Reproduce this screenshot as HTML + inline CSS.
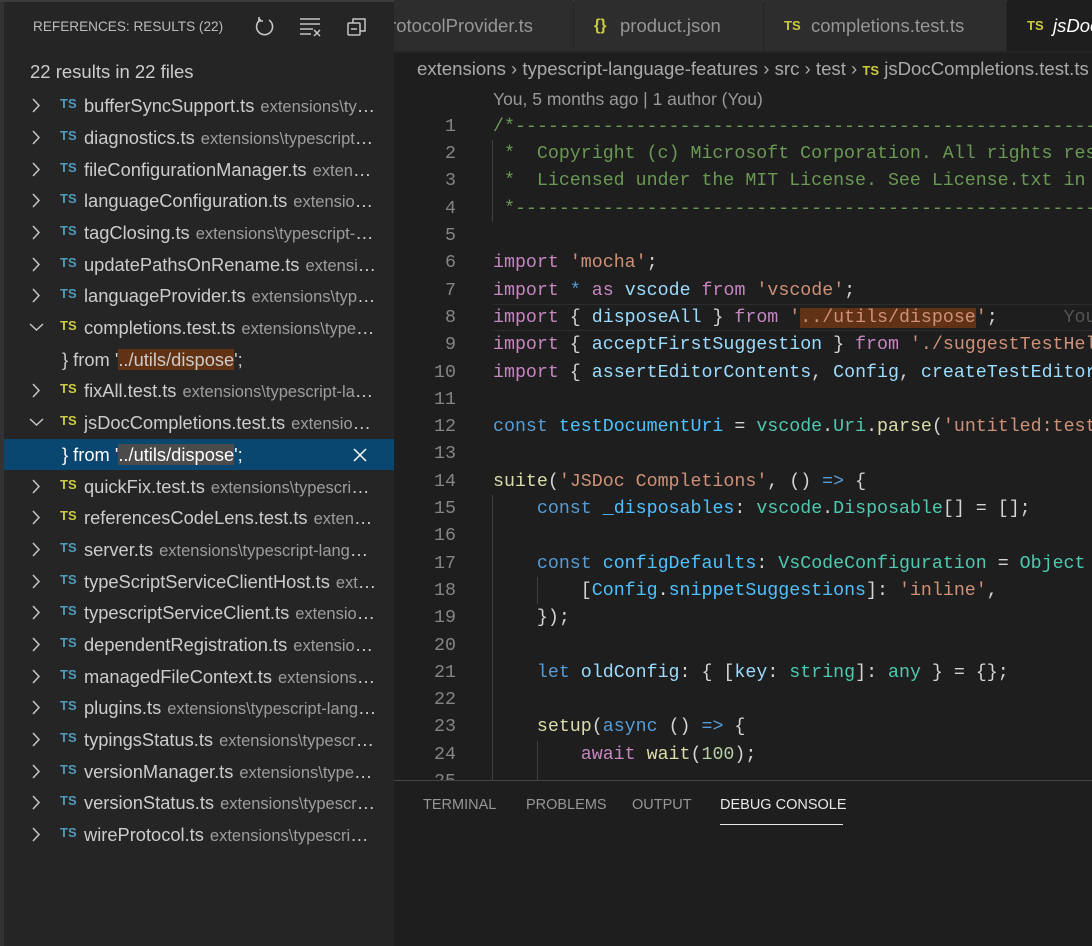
<!DOCTYPE html>
<html><head><meta charset="utf-8"><style>
*{margin:0;padding:0;box-sizing:border-box}
html{overflow:hidden}
body{width:1092px;height:946px;overflow:hidden;background:#1e1e1e;position:relative;font-family:"Liberation Sans",sans-serif}
.abs{position:absolute}
#top{left:0;top:0;width:1092px;height:2px;background:#3c3c3c}
#act{left:0;top:0;width:4px;height:946px;background:#333}
#side{left:4px;top:2px;width:390px;height:944px;background:#252526}
.row{position:absolute;left:4px;width:390px;height:31px;line-height:31px;color:#ccc;font-size:18.3px}
.chev{position:absolute;left:24px;top:0;width:16px;height:31px}
.ts{position:absolute;left:56px;font-size:13px;font-weight:bold;color:#519aba;top:-2px}
.ts.y{color:#cbcb41}
.lab{position:absolute;left:80px;width:293px;white-space:nowrap;overflow:hidden;text-overflow:ellipsis}
.desc{color:#9d9d9d;font-size:16.5px;margin-left:6px}
#tabs{left:394px;top:2px;width:698px;height:51px;background:#252526}
.tab{position:absolute;top:0;height:51px;background:#2d2d2d;color:#969696;font-size:18.5px;line-height:51px;white-space:nowrap;overflow:hidden}
.code{position:absolute;left:493px;font-family:"Liberation Mono",monospace;font-size:18.3px;white-space:pre;color:#d4d4d4;height:27px;line-height:27px;overflow:hidden;width:599px}
.ln{position:absolute;left:400px;width:56px;text-align:right;font-family:"Liberation Mono",monospace;font-size:18.3px;color:#858585;line-height:27px}
.k{color:#c586c0}.s{color:#ce9178}.v{color:#9cdcfe}.b{color:#569cd6}.f{color:#dcdcaa}.t{color:#4ec9b0}.c{color:#6a9955}.n{color:#b5cea8}
.hl{background:#613214}
.ptab{position:absolute;top:797px;font-size:14.5px;color:#969696}
#ed{position:absolute;left:394px;top:110px;width:698px;height:670px;overflow:hidden}
</style></head><body>
<div class="abs" id="side"></div>
<div class="abs" id="act"></div>
<div class="abs" id="top"></div>

<div class="abs" style="left:33px;top:19px;font-size:13.6px;color:#bbb">REFERENCES: RESULTS (22)</div>
<svg class="abs" style="left:253px;top:15px" width="24" height="24" viewBox="0 0 24 24" fill="none" stroke="#c5c5c5" stroke-width="1.6"><path d="M8 4.5A8 8 0 1 0 16 5"/><path d="M6 2v4h4" /></svg>
<svg class="abs" style="left:299px;top:16px" width="24" height="22" viewBox="0 0 24 22" fill="none" stroke="#c5c5c5" stroke-width="1.5"><path d="M1 3h20M1 8h20M1 13h13M1 18h11M15 14l6 6M21 14l-6 6"/></svg>
<svg class="abs" style="left:346px;top:16px" width="22" height="22" viewBox="0 0 22 22" fill="none" stroke="#c5c5c5" stroke-width="1.5"><rect x="2" y="7" width="12" height="12" rx="1"/><path d="M7 7V3h12v12h-5M5 13h6"/></svg>

<div class="abs" style="left:30px;top:61px;font-size:18.5px;color:#ccc">22 results in 22 files</div>

<div class="row" style="top:90px"><svg class="chev" viewBox="0 0 16 31"><path d="M5 9l6 6.5-6 6.5" fill="none" stroke="#c5c5c5" stroke-width="1.5"/></svg><span class="ts">TS</span><div class="lab">bufferSyncSupport.ts<span class="desc">extensions\typescript-language-features</span></div></div>
<div class="row" style="top:122px"><svg class="chev" viewBox="0 0 16 31"><path d="M5 9l6 6.5-6 6.5" fill="none" stroke="#c5c5c5" stroke-width="1.5"/></svg><span class="ts">TS</span><div class="lab">diagnostics.ts<span class="desc">extensions\typescript-language-features</span></div></div>
<div class="row" style="top:154px"><svg class="chev" viewBox="0 0 16 31"><path d="M5 9l6 6.5-6 6.5" fill="none" stroke="#c5c5c5" stroke-width="1.5"/></svg><span class="ts">TS</span><div class="lab">fileConfigurationManager.ts<span class="desc">extensions\typescript-language-features</span></div></div>
<div class="row" style="top:185px"><svg class="chev" viewBox="0 0 16 31"><path d="M5 9l6 6.5-6 6.5" fill="none" stroke="#c5c5c5" stroke-width="1.5"/></svg><span class="ts">TS</span><div class="lab">languageConfiguration.ts<span class="desc">extensions\typescript-language-features</span></div></div>
<div class="row" style="top:217px"><svg class="chev" viewBox="0 0 16 31"><path d="M5 9l6 6.5-6 6.5" fill="none" stroke="#c5c5c5" stroke-width="1.5"/></svg><span class="ts">TS</span><div class="lab">tagClosing.ts<span class="desc">extensions\typescript-language-features</span></div></div>
<div class="row" style="top:249px"><svg class="chev" viewBox="0 0 16 31"><path d="M5 9l6 6.5-6 6.5" fill="none" stroke="#c5c5c5" stroke-width="1.5"/></svg><span class="ts">TS</span><div class="lab">updatePathsOnRename.ts<span class="desc">extensions\typescript-language-features</span></div></div>
<div class="row" style="top:280px"><svg class="chev" viewBox="0 0 16 31"><path d="M5 9l6 6.5-6 6.5" fill="none" stroke="#c5c5c5" stroke-width="1.5"/></svg><span class="ts">TS</span><div class="lab">languageProvider.ts<span class="desc">extensions\typescript-language-features</span></div></div>
<div class="row" style="top:312px"><svg class="chev" viewBox="0 0 16 31"><path d="M2 12l6.5 6 6.5-6" fill="none" stroke="#c5c5c5" stroke-width="1.5"/></svg><span class="ts y">TS</span><div class="lab">completions.test.ts<span class="desc">extensions\typescript-language-features</span></div></div>
<div class="row" style="top:344px"><div class="lab" style="left:58px">} from '<span class="hl">../utils/dispose</span>';</div></div>
<div class="row" style="top:375px"><svg class="chev" viewBox="0 0 16 31"><path d="M5 9l6 6.5-6 6.5" fill="none" stroke="#c5c5c5" stroke-width="1.5"/></svg><span class="ts y">TS</span><div class="lab">fixAll.test.ts<span class="desc">extensions\typescript-language-features</span></div></div>
<div class="row" style="top:407px"><svg class="chev" viewBox="0 0 16 31"><path d="M2 12l6.5 6 6.5-6" fill="none" stroke="#c5c5c5" stroke-width="1.5"/></svg><span class="ts y">TS</span><div class="lab">jsDocCompletions.test.ts<span class="desc">extensions\typescript-language-features</span></div></div>
<div class="row" style="top:439px;background:#094771;color:#fff"><div class="lab" style="left:58px">} from '<span style="background:#4b4b4b">../utils/dispose</span>';</div><svg class="abs" style="left:349px;top:9px" width="14" height="14" viewBox="0 0 14 14"><path d="M1 1l12 12M13 1L1 13" stroke="#fff" stroke-width="1.5"/></svg></div>
<div class="row" style="top:471px"><svg class="chev" viewBox="0 0 16 31"><path d="M5 9l6 6.5-6 6.5" fill="none" stroke="#c5c5c5" stroke-width="1.5"/></svg><span class="ts y">TS</span><div class="lab">quickFix.test.ts<span class="desc">extensions\typescript-language-features</span></div></div>
<div class="row" style="top:502px"><svg class="chev" viewBox="0 0 16 31"><path d="M5 9l6 6.5-6 6.5" fill="none" stroke="#c5c5c5" stroke-width="1.5"/></svg><span class="ts y">TS</span><div class="lab">referencesCodeLens.test.ts<span class="desc">extensions\typescript-language-features</span></div></div>
<div class="row" style="top:534px"><svg class="chev" viewBox="0 0 16 31"><path d="M5 9l6 6.5-6 6.5" fill="none" stroke="#c5c5c5" stroke-width="1.5"/></svg><span class="ts">TS</span><div class="lab">server.ts<span class="desc">extensions\typescript-language-features</span></div></div>
<div class="row" style="top:566px"><svg class="chev" viewBox="0 0 16 31"><path d="M5 9l6 6.5-6 6.5" fill="none" stroke="#c5c5c5" stroke-width="1.5"/></svg><span class="ts">TS</span><div class="lab">typeScriptServiceClientHost.ts<span class="desc">extensions\typescript-language-features</span></div></div>
<div class="row" style="top:597px"><svg class="chev" viewBox="0 0 16 31"><path d="M5 9l6 6.5-6 6.5" fill="none" stroke="#c5c5c5" stroke-width="1.5"/></svg><span class="ts">TS</span><div class="lab">typescriptServiceClient.ts<span class="desc">extensions\typescript-language-features</span></div></div>
<div class="row" style="top:629px"><svg class="chev" viewBox="0 0 16 31"><path d="M5 9l6 6.5-6 6.5" fill="none" stroke="#c5c5c5" stroke-width="1.5"/></svg><span class="ts">TS</span><div class="lab">dependentRegistration.ts<span class="desc">extensions\typescript-language-features</span></div></div>
<div class="row" style="top:661px"><svg class="chev" viewBox="0 0 16 31"><path d="M5 9l6 6.5-6 6.5" fill="none" stroke="#c5c5c5" stroke-width="1.5"/></svg><span class="ts">TS</span><div class="lab">managedFileContext.ts<span class="desc">extensions\typescript-language-features</span></div></div>
<div class="row" style="top:692px"><svg class="chev" viewBox="0 0 16 31"><path d="M5 9l6 6.5-6 6.5" fill="none" stroke="#c5c5c5" stroke-width="1.5"/></svg><span class="ts">TS</span><div class="lab">plugins.ts<span class="desc">extensions\typescript-language-features</span></div></div>
<div class="row" style="top:724px"><svg class="chev" viewBox="0 0 16 31"><path d="M5 9l6 6.5-6 6.5" fill="none" stroke="#c5c5c5" stroke-width="1.5"/></svg><span class="ts">TS</span><div class="lab">typingsStatus.ts<span class="desc">extensions\typescript-language-features</span></div></div>
<div class="row" style="top:756px"><svg class="chev" viewBox="0 0 16 31"><path d="M5 9l6 6.5-6 6.5" fill="none" stroke="#c5c5c5" stroke-width="1.5"/></svg><span class="ts">TS</span><div class="lab">versionManager.ts<span class="desc">extensions\typescript-language-features</span></div></div>
<div class="row" style="top:787px"><svg class="chev" viewBox="0 0 16 31"><path d="M5 9l6 6.5-6 6.5" fill="none" stroke="#c5c5c5" stroke-width="1.5"/></svg><span class="ts">TS</span><div class="lab">versionStatus.ts<span class="desc">extensions\typescript-language-features</span></div></div>
<div class="row" style="top:819px"><svg class="chev" viewBox="0 0 16 31"><path d="M5 9l6 6.5-6 6.5" fill="none" stroke="#c5c5c5" stroke-width="1.5"/></svg><span class="ts">TS</span><div class="lab">wireProtocol.ts<span class="desc">extensions\typescript-language-features</span></div></div>

<div class="abs" id="tabs"></div>
<div class="tab" style="left:394px;width:179px"><span style="position:absolute;right:40px">typescriptWireProtocolProvider.ts</span></div>
<div class="tab" style="left:574px;width:189px"><span style="position:absolute;left:20px;color:#cbcb41;font-weight:bold;font-size:16px">{}</span><span style="position:absolute;left:46px">product.json</span></div>
<div class="tab" style="left:764px;width:242px"><span style="position:absolute;left:20px;color:#cbcb41;font-weight:bold;font-size:13px">TS</span><span style="position:absolute;left:47px">completions.test.ts</span></div>
<div class="tab" style="left:1007px;width:85px;background:#1e1e1e;color:#fff"><span style="position:absolute;left:20px;color:#cbcb41;font-weight:bold;font-size:13px">TS</span><span style="position:absolute;left:46px;font-style:italic">jsDocCompletions.test.ts</span></div>

<div class="abs" style="left:417px;top:58px;width:675px;overflow:hidden;font-size:18.6px;color:#a9a9a9;white-space:nowrap">extensions &#8250; typescript-language-features &#8250; src &#8250; test &#8250; <span style="color:#cbcb41;font-weight:bold;font-size:13px">TS</span> jsDocCompletions.test.ts</div>
<div class="abs" style="left:493px;top:89px;font-size:17.5px;color:#999;white-space:nowrap">You, 5 months ago | 1 author (You)</div>

<div class="abs" style="left:492px;top:140px;width:1px;height:82px;background:#404040"></div>
<div class="abs" style="left:492px;top:495px;width:1px;height:285px;background:#404040"></div>
<div class="abs" style="left:537px;top:577px;width:1px;height:27px;background:#404040"></div>
<div class="abs" style="left:537px;top:741px;width:1px;height:39px;background:#404040"></div>
<div class="abs" style="left:493px;top:304px;width:599px;height:27px;border-top:1px solid #2c2c2c;border-bottom:1px solid #2c2c2c"></div>

<div style="position:absolute;left:0;top:2px;width:1092px;height:778px;overflow:hidden">
<div class="ln" style="top:112px">1</div><div class="code c" style="top:112px">/*----------------------------------------------------------</div>
<div class="ln" style="top:139px">2</div><div class="code c" style="top:139px"> *  Copyright (c) Microsoft Corporation. All rights reserved.</div>
<div class="ln" style="top:166px">3</div><div class="code c" style="top:166px"> *  Licensed under the MIT License. See License.txt in the</div>
<div class="ln" style="top:194px">4</div><div class="code c" style="top:194px"> *----------------------------------------------------------</div>
<div class="ln" style="top:221px">5</div>
<div class="ln" style="top:248px">6</div><div class="code" style="top:248px"><span class="k">import</span> <span class="s">'mocha'</span>;</div>
<div class="ln" style="top:276px">7</div><div class="code" style="top:276px"><span class="k">import</span> <span class="b">*</span> <span class="k">as</span> <span class="v">vscode</span> <span class="k">from</span> <span class="s">'vscode'</span>;</div>
<div class="ln" style="top:303px">8</div><div class="code" style="top:303px"><span class="k">import</span> { <span class="v">disposeAll</span> } <span class="k">from</span> <span class="s">'<span class="hl">../utils/dispose</span>'</span>;      <span style="color:#555">You</span></div>
<div class="ln" style="top:330px">9</div><div class="code" style="top:330px"><span class="k">import</span> { <span class="v">acceptFirstSuggestion</span> } <span class="k">from</span> <span class="s">'./suggestTestHelpers'</span>;</div>
<div class="ln" style="top:358px">10</div><div class="code" style="top:358px"><span class="k">import</span> { <span class="v">assertEditorContents</span>, <span class="v">Config</span>, <span class="v">createTestEditor</span></div>
<div class="ln" style="top:385px">11</div>
<div class="ln" style="top:412px">12</div><div class="code" style="top:412px"><span class="b">const</span> <span class="v" style="color:#4fc1ff">testDocumentUri</span> = <span class="t">vscode</span>.<span class="t">Uri</span>.<span class="f">parse</span>(<span class="s">'untitled:test.ts'</span></div>
<div class="ln" style="top:439px">13</div>
<div class="ln" style="top:467px">14</div><div class="code" style="top:467px"><span class="f">suite</span>(<span class="s">'JSDoc Completions'</span>, () <span class="b">=&gt;</span> {</div>
<div class="ln" style="top:494px">15</div><div class="code" style="top:494px">    <span class="b">const</span> <span class="v" style="color:#4fc1ff">_disposables</span>: <span class="t">vscode</span>.<span class="t">Disposable</span>[] = [];</div>
<div class="ln" style="top:521px">16</div>
<div class="ln" style="top:549px">17</div><div class="code" style="top:549px">    <span class="b">const</span> <span class="v" style="color:#4fc1ff">configDefaults</span>: <span class="t">VsCodeConfiguration</span> = <span class="t">Object</span></div>
<div class="ln" style="top:576px">18</div><div class="code" style="top:576px">        [<span class="v" style="color:#4fc1ff">Config</span>.<span class="v" style="color:#4fc1ff">snippetSuggestions</span>]: <span class="s">'inline'</span>,</div>
<div class="ln" style="top:603px">19</div><div class="code" style="top:603px">    });</div>
<div class="ln" style="top:631px">20</div>
<div class="ln" style="top:658px">21</div><div class="code" style="top:658px">    <span class="b">let</span> <span class="v">oldConfig</span>: { [<span class="v">key</span>: <span class="t">string</span>]: <span class="t">any</span> } = {};</div>
<div class="ln" style="top:685px">22</div>
<div class="ln" style="top:712px">23</div><div class="code" style="top:712px">    <span class="f">setup</span>(<span class="b">async</span> () <span class="b">=&gt;</span> {</div>
<div class="ln" style="top:740px">24</div><div class="code" style="top:740px">        <span class="k">await</span> <span class="f">wait</span>(<span class="n">100</span>);</div>
<div class="ln" style="top:767px">25</div>
</div>

<div class="abs" style="left:394px;top:780px;width:698px;height:166px;background:#1e1e1e;border-top:1px solid #444"></div>
<div class="ptab" style="left:423px">TERMINAL</div>
<div class="ptab" style="left:526px">PROBLEMS</div>
<div class="ptab" style="left:632px">OUTPUT</div>
<div class="ptab" style="left:720px;color:#e7e7e7">DEBUG CONSOLE</div>
<div class="abs" style="left:720px;top:824px;width:123px;height:1px;background:#e7e7e7"></div>
</body></html>
